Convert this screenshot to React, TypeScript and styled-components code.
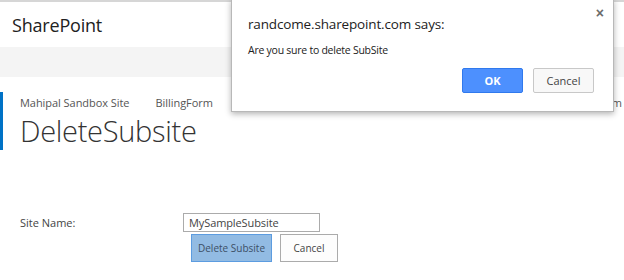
import React from 'react';
import styled, { createGlobalStyle } from 'styled-components';

const GlobalStyle = createGlobalStyle`
  html, body {
    margin: 0;
    padding: 0;
    background: #ffffff;
  }
  body {
    font-family: "Open Sans", "Liberation Sans", sans-serif;
    color: #444444;
  }
`;

const Page = styled.div`
  position: relative;
  width: 624px;
  height: 280px;
  overflow: hidden;
  background: #ffffff;
`;

// Suite header
const SuiteBar = styled.div`
  height: 45px;
  border-top: 2px solid #d6d6d6;
  display: flex;
  align-items: center;
  padding-left: 12px;
`;

const Brand = styled.span`
  font-size: 18px;
  color: #212121;
  letter-spacing: -0.2px;
`;

const RibbonBand = styled.div`
  height: 30px;
  background: #f4f4f4;
`;

// Title area
const TitleArea = styled.div`
  margin-top: 15px;
  border-left: 3px solid #0072c6;
  padding-left: 17px;
  height: 58px;
`;

const Breadcrumbs = styled.nav`
  display: flex;
  gap: 26px;
  height: 20px;
  align-items: center;
  white-space: nowrap;
  padding-right: 2px;
`;

const Crumb = styled.span<{ trailing?: boolean }>`
  font-size: 11px;
  letter-spacing: -0.05px;
  color: #555555;
  margin-left: ${p => (p.trailing ? 'auto' : '0')};
`;

const PageTitle = styled.h1`
  margin: 0;
  font-size: 29px;
  font-weight: 300;
  color: #333333;
  line-height: 38px;
  letter-spacing: -0.3px;
`;

// Form
const Form = styled.div`
  margin-top: 63px;
  padding-left: 20px;
  display: grid;
  grid-template-columns: 163px auto;
  row-gap: 2px;
  align-items: center;
`;

const Label = styled.label`
  font-size: 11px;
  color: #444444;
`;

const TextInput = styled.input`
  box-sizing: border-box;
  width: 137px;
  height: 19px;
  border: 1px solid #ababab;
  padding: 0 5px;
  font: 400 11px "Open Sans", "Liberation Sans", sans-serif;
  letter-spacing: -0.1px;
  color: #444444;
  outline: none;
`;

const ButtonRow = styled.div`
  grid-column: 2;
  display: flex;
  gap: 8px;
  padding-left: 8px;
`;

const FormButton = styled.button<{ primary?: boolean }>`
  box-sizing: border-box;
  height: 28px;
  padding: 0;
  width: ${p => (p.primary ? '81px' : '58px')};
  border: 1px solid ${p => (p.primary ? '#5c9ce0' : '#ababab')};
  background: ${p => (p.primary ? '#92bbe3' : '#fdfdfd')};
  color: ${p => (p.primary ? '#3d4f66' : '#444444')};
  font: 400 10px "Open Sans", "Liberation Sans", sans-serif;
`;

// Browser confirm dialog
const Dialog = styled.div`
  position: absolute;
  left: 231px;
  top: -1px;
  width: 383px;
  height: 113px;
  box-sizing: border-box;
  background: #ffffff;
  border: 1px solid #b8b8b8;
  box-shadow: 0 2px 6px rgba(0, 0, 0, 0.3);
  padding: 14px 19px 0 16px;
`;

const CloseX = styled.span`
  position: absolute;
  right: 9px;
  top: 5px;
  font-family: "Liberation Sans", sans-serif;
  font-size: 14px;
  font-weight: bold;
  color: #6b6b6b;
`;

const DialogTitle = styled.div`
  font-size: 13.5px;
  letter-spacing: -0.15px;
  color: #222222;
  line-height: 20px;
`;

const DialogMessage = styled.div`
  margin-top: 8px;
  font-size: 10.5px;
  letter-spacing: -0.25px;
  color: #222222;
  line-height: 16px;
`;

const DialogActions = styled.div`
  display: flex;
  justify-content: flex-end;
  gap: 10px;
  margin-top: 10px;
`;

const DialogButton = styled.button<{ primary?: boolean }>`
  box-sizing: border-box;
  width: 61px;
  height: 25px;
  padding: 0;
  border-radius: 2px;
  border: 1px solid ${p => (p.primary ? '#3079ed' : '#c8c8c8')};
  background: ${p => (p.primary ? '#4d90fe' : '#f8f8f8')};
  color: ${p => (p.primary ? '#ffffff' : '#444444')};
  font: ${p => (p.primary ? 700 : 400)} 11px "Open Sans", "Liberation Sans", sans-serif;
`;

export default function App() {
  return (
    <Page>
      <GlobalStyle />
      <SuiteBar>
        <Brand>SharePoint</Brand>
      </SuiteBar>
      <RibbonBand />
      <TitleArea>
        <Breadcrumbs>
          <Crumb>Mahipal Sandbox Site</Crumb>
          <Crumb>BillingForm</Crumb>
          <Crumb>Site Contents</Crumb>
          <Crumb trailing>ListForm</Crumb>
        </Breadcrumbs>
        <PageTitle>DeleteSubsite</PageTitle>
      </TitleArea>
      <Form>
        <Label>Site Name:</Label>
        <TextInput defaultValue="MySampleSubsite" />
        <ButtonRow>
          <FormButton primary>Delete Subsite</FormButton>
          <FormButton>Cancel</FormButton>
        </ButtonRow>
      </Form>
      <Dialog>
        <CloseX>×</CloseX>
        <DialogTitle>randcome.sharepoint.com says:</DialogTitle>
        <DialogMessage>Are you sure to delete SubSite</DialogMessage>
        <DialogActions>
          <DialogButton primary>OK</DialogButton>
          <DialogButton>Cancel</DialogButton>
        </DialogActions>
      </Dialog>
    </Page>
  );
}
